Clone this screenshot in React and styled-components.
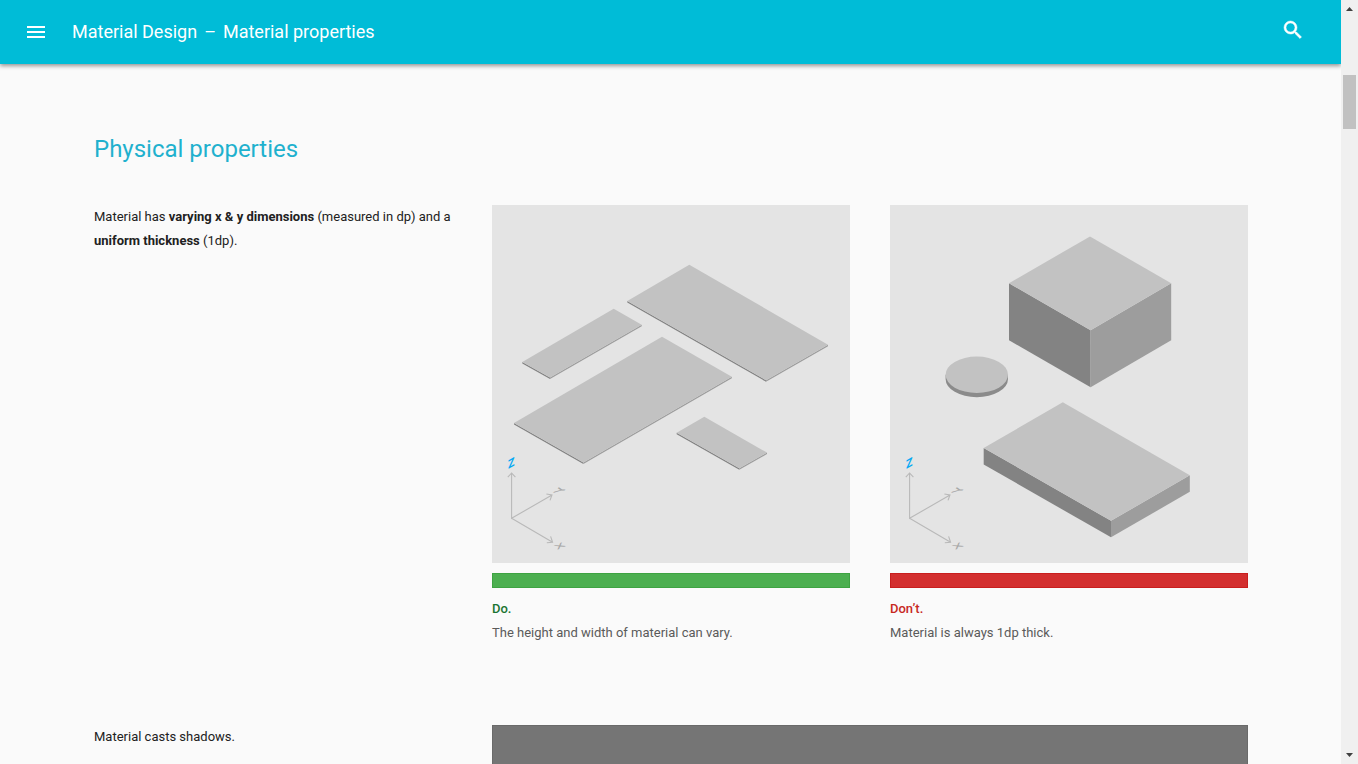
import React from 'react';
import styled, { createGlobalStyle } from 'styled-components';

const GlobalStyle = createGlobalStyle`
  * {
    box-sizing: border-box;
  }
  body {
    margin: 0;
    background: #fafafa;
    color: #212121;
    font-family: Roboto, sans-serif;
    font-size: 13px;
    line-height: 24px;
  }
`;

const Shell = styled.div`
  display: flex;
  height: 100vh;
  overflow: hidden;
`;

const Page = styled.div`
  flex: 1;
  min-width: 0;
  overflow: hidden;
`;

const Header = styled.header`
  position: relative;
  display: flex;
  align-items: center;
  height: 64px;
  padding: 0 36px 0 24px;
  background: #00bcd7;
  color: white;
  box-shadow: 0 2px 4px rgba(0, 0, 0, 0.4);
`;

const IconButton = styled.button`
  display: flex;
  padding: 0;
  border: 0;
  background: none;
  color: inherit;
  cursor: pointer;
`;

const SearchButton = styled(IconButton)`
  margin: 0 0 4px auto;
`;

const Crumbs = styled.nav`
  display: flex;
  margin-left: 24px;
  font-size: 18px;
`;

const Crumb = styled.a`
  color: inherit;
  text-decoration: none;
`;

const Dash = styled.span`
  margin: 0 7px;
`;

const Main = styled.main`
  padding: 69px 93px 0 94px;
`;

const Title = styled.h1`
  margin: 0 0 40px;
  color: #1fb1ce;
  font-size: 24px;
  font-weight: 400;
  line-height: 32px;
`;

const Row = styled.section`
  display: grid;
  grid-template-columns: repeat(3, 1fr);
  column-gap: 40px;
  margin-bottom: 80px;
`;

const Text = styled.p`
  margin: 0;
  strong {
    font-weight: 700;
  }
`;

const Card = styled.figure`
  margin: 0;
`;

const Drawing = styled.svg`
  display: block;
  width: 100%;
  background: #e4e4e4;
`;

const Bar = styled.div`
  height: 15px;
  margin: 10px 0 9px;
  border: 1px solid ${p => p.$edge};
  background: ${p => p.$color};
`;

const Caption = styled.figcaption`
  color: #5a5a5a;
`;

const Verdict = styled.div`
  color: ${p => p.$color};
  font-weight: 500;
`;

const Video = styled.div`
  grid-column: span 2;
  height: 425px;
  border: 1px solid #6a6a6a;
  background: #757575;
`;

const Scrollbar = styled.div`
  display: flex;
  flex-direction: column;
  flex: 0 0 17px;
  align-items: center;
  justify-content: space-between;
  background: #f0f0f0;
`;

const Track = styled.div`
  flex: 1;
  width: 13px;
  padding-top: 58px;
`;

const Thumb = styled.div`
  height: 54px;
  background: #c1c1c1;
`;

const Arrow = styled.svg`
  display: block;
  width: 17px;
  height: 17px;
  fill: #404040;
`;

const TOP = '#c2c2c2';
const LEFT = '#838383';
const RIGHT = '#9d9d9d';

// isometric block: a, b, c, d are the left, top, right and bottom corners of the upper face
const Block = ({ a, b, c, d, depth }) => {
  const down = ([x, y]) => [x, y + depth];
  return (
    <g>
      <polygon points={[a, d, down(d), down(a)].join(' ')} fill={LEFT} />
      <polygon points={[d, c, down(c), down(d)].join(' ')} fill={RIGHT} />
      <polygon points={[a, b, c, d].join(' ')} fill={TOP} />
    </g>
  );
};

const Axes = () => (
  <g fontFamily="Roboto, sans-serif" fontSize="11" fill="#a8a8a8">
    <path
      d="M19.6 268V313.3L60 290M19.6 313.3L60.6 337.2M15.8 272.2L19.6 268L23.4 272.2M54.4 289L60 290L58 295.4M58.6 331.4L60.6 337.2L54.8 337.8"
      fill="none"
      stroke="#b9b9b9"
      strokeWidth="1.1"
    />
    <text transform="matrix(0.9 -0.52 0 1 16 264)" fontSize="12" fontWeight="700" fill="#03a9f4">Z</text>
    <text transform="matrix(0.9 -0.9 1.15 0 70 288)">Y</text>
    <text transform="matrix(1.35 -0.6 0.5 0.5 65 345)">X</text>
  </g>
);

const SheetsDrawing = () => (
  <Drawing viewBox="0 0 358 358" role="img" aria-label="Thin sheets">
    <Block a={[135.3, 96]} b={[197.3, 59.7]} c={[336, 139.8]} d={[274, 175.2]} depth={1.5} />
    <Block a={[30.3, 157]} b={[121.7, 103.7]} c={[149.7, 119.8]} d={[58, 172.4]} depth={1.5} />
    <Block a={[22, 218]} b={[170, 131.8]} c={[239.8, 171.8]} d={[91.4, 257.4]} depth={1.5} />
    <Block a={[184.7, 227.8]} b={[212.3, 211.8]} c={[275, 247.6]} d={[247.3, 263.2]} depth={1.5} />
    <Axes />
  </Drawing>
);

const BlocksDrawing = () => (
  <Drawing viewBox="0 0 358 358" role="img" aria-label="Thick blocks">
    <Block a={[119, 78.3]} b={[200, 31.4]} c={[281.2, 78.3]} d={[200.6, 125.2]} depth={57} />
    <Block a={[93.7, 243]} b={[172.8, 197.2]} c={[299.8, 270.3]} d={[221, 315.8]} depth={16.5} />
    <path d="M55.6 169.8V174A31.2 18.2 0 0 0 118 174V169.8Z" fill="#8b8b8b" />
    <ellipse cx="86.8" cy="169.8" rx="31.2" ry="18.2" fill={TOP} />
    <Axes />
  </Drawing>
);

const App = () => (
  <>
    <GlobalStyle />
    <Shell>
      <Page>
        <Header>
          <IconButton aria-label="Menu">
            <svg width="24" height="24" viewBox="0 0 24 24" fill="currentColor">
              <path d="M3 18h18v-2H3v2zm0-5h18v-2H3v2zm0-7v2h18V6H3z" />
            </svg>
          </IconButton>
          <Crumbs>
            <Crumb href="#design">Material Design</Crumb>
            <Dash>–</Dash>
            <Crumb href="#properties">Material properties</Crumb>
          </Crumbs>
          <SearchButton aria-label="Search">
            <svg width="24" height="24" viewBox="0 0 24 24" fill="currentColor" stroke="currentColor" strokeWidth="0.5">
              <path d="M15.5 14h-.79l-.28-.27A6.471 6.471 0 0 0 16 9.5 6.5 6.5 0 1 0 9.5 16c1.61 0 3.09-.59 4.23-1.57l.27.28v.79l5 4.99L20.49 19l-4.99-5zm-6 0C7.01 14 5 11.99 5 9.5S7.01 5 9.5 5 14 7.01 14 9.5 11.99 14 9.5 14z" />
            </svg>
          </SearchButton>
        </Header>
        <Main>
          <Title>Physical properties</Title>
          <Row>
            <Text>
              Material has <strong>varying x &amp; y dimensions</strong> (measured in dp) and a{' '}
              <strong>uniform thickness</strong> (1dp).
            </Text>
            <Card>
              <SheetsDrawing />
              <Bar $color="#4caf50" $edge="#3ea342" />
              <Caption>
                <Verdict $color="#1b7431">Do.</Verdict>
                The height and width of material can vary.
              </Caption>
            </Card>
            <Card>
              <BlocksDrawing />
              <Bar $color="#d32f2f" $edge="#c81e1e" />
              <Caption>
                <Verdict $color="#c7291f">Don’t.</Verdict>
                Material is always 1dp thick.
              </Caption>
            </Card>
          </Row>
          <Row>
            <Text>Material casts shadows.</Text>
            <Video />
          </Row>
        </Main>
      </Page>
      <Scrollbar>
        <Arrow viewBox="0 0 17 17"><path d="M5 11L8.5 7L12 11Z" /></Arrow>
        <Track>
          <Thumb />
        </Track>
        <Arrow viewBox="0 0 17 17"><path d="M5 6L8.5 10L12 6Z" /></Arrow>
      </Scrollbar>
    </Shell>
  </>
);

export default App;
